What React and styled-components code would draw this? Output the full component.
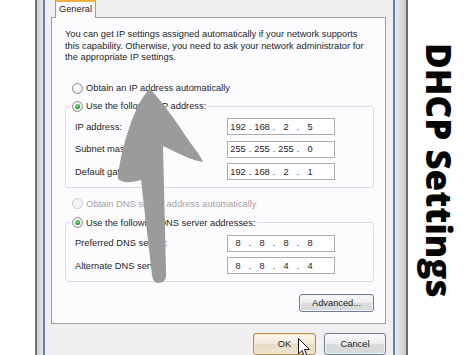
import React from 'react'
import styled, { createGlobalStyle } from 'styled-components'

const GlobalStyle = createGlobalStyle`
  html, body {
    margin: 0;
    padding: 0;
    background: #ffffff;
  }
  body {
    width: 474px;
    height: 355px;
    overflow: hidden;
    font-family: "Liberation Sans", Arial, sans-serif;
  }
`;

const Page = styled.div`
    position: relative;
    display: flex;
    width: 474px;
    height: 355px;
    overflow: hidden;
    background: #ffffff;
`;

const Gutter = styled.div`
    width: 35px;
    flex-shrink: 0;
`;

const Window = styled.div`
    display: flex;
    width: 373px;
    flex-shrink: 0;
    box-sizing: border-box;
    border-left: 2px solid #737373;
    border-right: 2px solid #6b6b6b;
`;

const Frame = styled.div`
    width: ${p => p.$w}px;
    flex-shrink: 0;
    background: ${p => p.$right
        ? 'linear-gradient(to right, #ececee 0%, #dcdcde 50%, #c8c8ca 100%)'
        : 'linear-gradient(to right, #cfcfd1 0%, #e6e6e8 100%)'};
`;

const Dialog = styled.div`
    flex: 1;
    display: flex;
    flex-direction: column;
    background: #f0f0f0;
    border-left: 2px solid #5d81c4;
    border-right: 2px solid #5d81c4;
    font-size: 9.3px;
    color: #1e1e1e;
`;

const TabStrip = styled.div`
    height: 17px;
    display: flex;
    padding-left: 10px;
`;

const Tab = styled.div`
    position: relative;
    z-index: 1;
    width: 41px;
    height: 18px;
    margin-bottom: -1px;
    box-sizing: border-box;
    background: #fcfcfe;
    border: 1px solid #9a9da3;
    border-top: 2px solid #f2b23e;
    border-bottom: none;
    display: flex;
    align-items: center;
    justify-content: center;
    padding-bottom: 2px;
`;

const Panel = styled.div`
    margin-left: 6px;
    width: 335px;
    height: 312px;
    box-sizing: border-box;
    border: 1px solid #9a9da3;
    background: #fcfcfe;
    padding: 11px 11px 11px 13px;
    display: flex;
    flex-direction: column;
`;

const Intro = styled.p`
    margin: 0;
    line-height: 11.5px;
    white-space: nowrap;
`;

const Choice = styled.div`
    display: flex;
    align-items: center;
    gap: 3px;
    height: 14px;
    margin-top: ${p => p.$top || 0}px;
    margin-left: 7px;
    color: ${p => p.$disabled ? '#a3a3a3' : 'inherit'};
`;

const Radio = styled.span`
    position: relative;
    width: 11px;
    height: 11px;
    box-sizing: border-box;
    border-radius: 50%;
    border: 1px solid ${p => p.$disabled ? '#cacaca' : '#8b8b8b'};
    background: ${p => p.$disabled
        ? '#f6f6f6'
        : 'radial-gradient(circle at 40% 35%, #ffffff 0%, #f0f0f0 55%, #d8d8d8 100%)'};
    flex-shrink: 0;

    &::after {
        content: '';
        display: ${p => p.$checked ? 'block' : 'none'};
        position: absolute;
        left: 2px;
        top: 2px;
        width: 5px;
        height: 5px;
        border-radius: 50%;
        background: radial-gradient(circle at 40% 35%, #8fe08a 0%, #2f9e31 60%, #1c7a20 100%);
    }
`;

const Group = styled.fieldset`
    margin: ${p => p.$top || 0}px 0 0 0;
    padding: 5px 8px 6.5px 9px;
    min-width: 0;
    border: 1px solid #d5dde3;
    border-radius: 3px;
`;

const Legend = styled.legend`
    padding: 0 2px;
    margin-left: -5px;
`;

const LegendBody = styled.span`
    display: flex;
    align-items: center;
    gap: 3px;
    height: 14px;
`;

const Rows = styled.div`
    display: flex;
    flex-direction: column;
    gap: 5.5px;
`;

const Row = styled.div`
    display: grid;
    grid-template-columns: 152px 108px;
    align-items: center;
    height: 17px;
`;

const IpBox = styled.div`
    display: flex;
    align-items: center;
    width: 108px;
    height: 17px;
    box-sizing: border-box;
    border: 1px solid #abadb3;
    background: #ffffff;
    padding-left: 1px;
`;

const Octet = styled.span`
    width: 18px;
    text-align: center;
`;

const Dot = styled.span`
    width: 6px;
    text-align: center;
`;

const Footer = styled.div`
    margin-top: auto;
    display: flex;
    justify-content: flex-end;
`;

const Button = styled.button`
    width: ${p => p.$w}px;
    height: ${p => p.$h || 18}px;
    box-sizing: border-box;
    padding: 0;
    font-family: "Liberation Sans", Arial, sans-serif;
    font-size: 9.3px;
    color: #1e1e1e;
    border-radius: 3px;
    border: 1px solid ${p => p.$tone === 'hot' ? '#b58a52' : '#6f7d92'};
    background: ${p => p.$tone === 'hot'
        ? 'linear-gradient(to bottom, #fdf8ef 0%, #f4ead8 48%, #e8dbc2 52%, #efe5d2 100%)'
        : 'linear-gradient(to bottom, #fafafa 0%, #ececec 48%, #dcdcdc 52%, #d6d9de 100%)'};
    box-shadow: inset 0 0 0 1px ${p => p.$tone === 'hot' ? '#f9e6c4' : '#f4f6f9'};
`;

const Actions = styled.div`
    display: flex;
    justify-content: flex-end;
    gap: 8px;
    margin-top: 9px;
    padding-right: 7px;
`;

const Side = styled.div`
    flex: 1;
    display: flex;
    justify-content: center;
    padding-top: 43px;
    padding-right: 4px;
`;

const Title = styled.h1`
    margin: 0;
    writing-mode: vertical-rl;
    font-family: "Open Sans", "Noto Sans", sans-serif;
    font-weight: 800;
    font-size: 35px;
    line-height: 1;
    color: #050505;
    white-space: nowrap;
`;

const Overlay = styled.svg`
    position: absolute;
    left: 0;
    top: 0;
    pointer-events: none;
`;

const Pointer = styled.svg`
    position: absolute;
    left: 298px;
    top: 338px;
    pointer-events: none;
`;

const IpField = ({ parts }) => (
    <IpBox>
        {parts.map((n, i) => (
            <React.Fragment key={i}>
                <Octet>{n}</Octet>
                {i < 3 && <Dot>.</Dot>}
            </React.Fragment>
        ))}
    </IpBox>
)

const ipRows = [
    { label: 'IP address:', parts: ['192', '168', '2', '5'] },
    { label: 'Subnet mask:', parts: ['255', '255', '255', '0'] },
    { label: 'Default gateway:', parts: ['192', '168', '2', '1'] },
]

const dnsRows = [
    { label: 'Preferred DNS server:', parts: ['8', '8', '8', '8'] },
    { label: 'Alternate DNS server:', parts: ['8', '8', '4', '4'] },
]

const App = () => {
  return (
    <Page>
        <GlobalStyle />
        <Gutter />
        <Window>
            <Frame $w={6} />
            <Dialog>
                <TabStrip>
                    <Tab>General</Tab>
                </TabStrip>
                <Panel>
                    <Intro>
                        You can get IP settings assigned automatically if your network supports<br />
                        this capability. Otherwise, you need to ask your network administrator for<br />
                        the appropriate IP settings.
                    </Intro>
                    <Choice $top={17.5}>
                        <Radio />
                        <span>Obtain an IP address automatically</span>
                    </Choice>
                    <Group $top={4}>
                        <Legend>
                            <LegendBody>
                                <Radio $checked />
                                <span>Use the following IP address:</span>
                            </LegendBody>
                        </Legend>
                        <Rows>
                            {ipRows.map(r => (
                                <Row key={r.label}>
                                    <span>{r.label}</span>
                                    <IpField parts={r.parts} />
                                </Row>
                            ))}
                        </Rows>
                    </Group>
                    <Choice $top={9} $disabled>
                        <Radio $disabled />
                        <span>Obtain DNS server address automatically</span>
                    </Choice>
                    <Group $top={5}>
                        <Legend>
                            <LegendBody>
                                <Radio $checked />
                                <span>Use the following DNS server addresses:</span>
                            </LegendBody>
                        </Legend>
                        <Rows>
                            {dnsRows.map(r => (
                                <Row key={r.label}>
                                    <span>{r.label}</span>
                                    <IpField parts={r.parts} />
                                </Row>
                            ))}
                        </Rows>
                    </Group>
                    <Footer>
                        <Button $w={75} $h={18}>Advanced...</Button>
                    </Footer>
                </Panel>
                <Actions>
                    <Button $w={63} $h={22} $tone="hot">OK</Button>
                    <Button $w={62} $h={22}>Cancel</Button>
                </Actions>
            </Dialog>
            <Frame $w={11} $right />
        </Window>
        <Side>
            <Title>DHCP Settings</Title>
        </Side>

        {/* hand drawn arrow pointing at the first option */}
        <Overlay width="474" height="355" viewBox="0 0 474 355">
            <path
                d="M150,89 C158,97 172,115 185,135 C193,147 201,156 203,162 C190,160 176,152 163,146 L166,272 Q167,283 158,283 Q153,283 152,275 L141,180 C133,182 124,184 118,179 C119,160 127,130 137,108 C142,98 146,92 150,89 Z"
                fill="#9b9b9b"
            />
        </Overlay>
        <Pointer width="13" height="20" viewBox="0 0 13 20">
            <path d="M0.5,0.5 L0.5,16 L4,12.5 L6.5,18.5 L9,17.5 L6.5,11.5 L11.5,11.5 Z" fill="#ffffff" stroke="#111111" strokeWidth="1" strokeLinejoin="round" />
        </Pointer>
    </Page>
  )
}

export default App
